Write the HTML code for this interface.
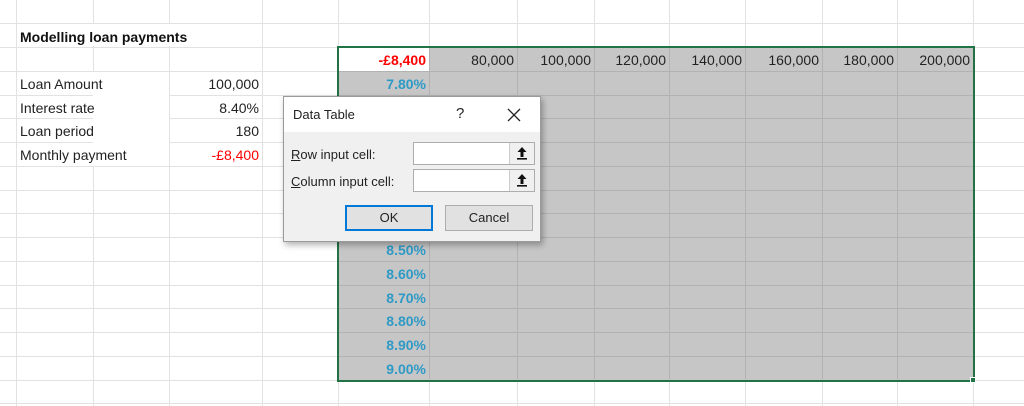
<!DOCTYPE html>
<html><head><meta charset="utf-8"><style>
*{margin:0;padding:0;box-sizing:border-box}
body{width:1024px;height:406px;background:#fff;position:relative;overflow:hidden;font-family:"Liberation Sans",sans-serif;font-size:14px;color:#222}
.v{position:absolute;top:0;width:1px;height:406px;background:#e2e2e2}
.h{position:absolute;left:0;height:1px;width:1024px;background:#e2e2e2}
.t{position:absolute;line-height:24px;height:24px;white-space:nowrap}
.r{text-align:right}
.gv{position:absolute;width:1px;background:#b2b2b2}
.gh{position:absolute;height:1px;background:#b2b2b2}
.pct{color:#2e9ac6;font-weight:bold}
.ab{position:absolute;right:0;top:0;width:25px;height:21px;background:#f0f0f0;border-left:1px solid #ccc}
</style></head><body>
<div class="v" style="left:16px"></div><div class="v" style="left:93px"></div><div class="v" style="left:169px"></div><div class="v" style="left:262px"></div><div class="v" style="left:338px"></div><div class="v" style="left:429px"></div><div class="v" style="left:517px"></div><div class="v" style="left:594px"></div><div class="v" style="left:669px"></div><div class="v" style="left:745px"></div><div class="v" style="left:822px"></div><div class="v" style="left:897px"></div><div class="v" style="left:973px"></div>
<div class="h" style="top:23px"></div><div class="h" style="top:47px"></div><div class="h" style="top:71px"></div><div class="h" style="top:95px"></div><div class="h" style="top:118px"></div><div class="h" style="top:142px"></div><div class="h" style="top:166px"></div><div class="h" style="top:190px"></div><div class="h" style="top:213px"></div><div class="h" style="top:237px"></div><div class="h" style="top:261px"></div><div class="h" style="top:285px"></div><div class="h" style="top:308px"></div><div class="h" style="top:332px"></div><div class="h" style="top:356px"></div><div class="h" style="top:380px"></div><div class="h" style="top:403px"></div>
<div style="position:absolute;left:93px;top:24px;width:150px;height:22px;background:#fff"></div>
<div style="position:absolute;left:93px;top:72px;width:76px;height:94px;background:#fff"></div>
<div class="t" style="left:20px;top:25px;font-weight:bold;color:#111">Modelling loan payments</div>
<div class="t" style="left:20px;top:72px">Loan Amount</div>
<div class="t" style="left:20px;top:96px">Interest rate</div>
<div class="t" style="left:20px;top:119px">Loan period</div>
<div class="t" style="left:20px;top:143px">Monthly payment</div>
<div class="t r" style="left:170px;width:89px;top:72px">100,000</div>
<div class="t r" style="left:170px;width:89px;top:96px">8.40%</div>
<div class="t r" style="left:170px;width:89px;top:119px">180</div>
<div class="t r" style="left:170px;width:89px;top:143px;color:#f00">-£8,400</div>
<div style="position:absolute;left:338px;top:47px;width:636px;height:333px;background:#c6c6c6"></div>
<div style="position:absolute;left:339px;top:48px;width:90px;height:23px;background:#fff"></div>
<div class="gv" style="left:429px;top:48px;height:331px"></div><div class="gv" style="left:517px;top:48px;height:331px"></div><div class="gv" style="left:594px;top:48px;height:331px"></div><div class="gv" style="left:669px;top:48px;height:331px"></div><div class="gv" style="left:745px;top:48px;height:331px"></div><div class="gv" style="left:822px;top:48px;height:331px"></div><div class="gv" style="left:897px;top:48px;height:331px"></div>
<div class="gh" style="left:339px;width:634px;top:71px"></div><div class="gh" style="left:339px;width:634px;top:95px"></div><div class="gh" style="left:339px;width:634px;top:118px"></div><div class="gh" style="left:339px;width:634px;top:142px"></div><div class="gh" style="left:339px;width:634px;top:166px"></div><div class="gh" style="left:339px;width:634px;top:190px"></div><div class="gh" style="left:339px;width:634px;top:213px"></div><div class="gh" style="left:339px;width:634px;top:237px"></div><div class="gh" style="left:339px;width:634px;top:261px"></div><div class="gh" style="left:339px;width:634px;top:285px"></div><div class="gh" style="left:339px;width:634px;top:308px"></div><div class="gh" style="left:339px;width:634px;top:332px"></div><div class="gh" style="left:339px;width:634px;top:356px"></div>
<div style="position:absolute;left:337px;top:46px;width:638px;height:336px;border:2px solid #217346"></div>
<div style="position:absolute;left:970px;top:377px;width:6px;height:6px;background:#217346;border:1px solid #fff"></div>
<div class="t r" style="left:339px;width:87px;top:48px;color:#f00;font-weight:bold">-£8,400</div>
<div class="t r" style="left:430px;width:84px;top:48px">80,000</div>
<div class="t r" style="left:518px;width:73px;top:48px">100,000</div>
<div class="t r" style="left:595px;width:71px;top:48px">120,000</div>
<div class="t r" style="left:670px;width:72px;top:48px">140,000</div>
<div class="t r" style="left:746px;width:73px;top:48px">160,000</div>
<div class="t r" style="left:823px;width:71px;top:48px">180,000</div>
<div class="t r" style="left:898px;width:72px;top:48px">200,000</div>
<div class="t r pct" style="left:339px;width:87px;top:72px">7.80%</div>
<div class="t r pct" style="left:339px;width:87px;top:238px">8.50%</div>
<div class="t r pct" style="left:339px;width:87px;top:262px">8.60%</div>
<div class="t r pct" style="left:339px;width:87px;top:286px">8.70%</div>
<div class="t r pct" style="left:339px;width:87px;top:309px">8.80%</div>
<div class="t r pct" style="left:339px;width:87px;top:333px">8.90%</div>
<div class="t r pct" style="left:339px;width:87px;top:357px">9.00%</div>
<div style="position:absolute;left:283px;top:96px;width:258px;height:146px;background:#f0f0f0;border:1px solid #9a9a9a;box-shadow:2px 3px 6px rgba(0,0,0,.3)">
 <div style="position:absolute;left:0;top:0;width:256px;height:35px;background:#fff"></div>
 <div class="t" style="left:9px;top:6px;font-size:13px">Data Table</div>
 <div class="t" style="left:172px;top:5px;font-size:15px">?</div>
 <svg style="position:absolute;left:223px;top:11px" width="14" height="14"><path d="M1 1L13 13M13 1L1 13" stroke="#222" stroke-width="1.3"/></svg>
 <div class="t" style="left:7px;top:46px;font-size:13px"><u>R</u>ow input cell:</div>
 <div class="t" style="left:7px;top:73px;font-size:13px"><u>C</u>olumn input cell:</div>
 <div style="position:absolute;left:129px;top:45px;width:122px;height:23px;border:1px solid #adadad;background:#fff"><div class="ab"><svg width="24" height="21"><path d="M12 4L7.5 9H10.5V14H13.5V9H16.5Z" fill="#111"/><rect x="7" y="15" width="10" height="1.6" fill="#111"/></svg></div></div>
 <div style="position:absolute;left:129px;top:72px;width:122px;height:23px;border:1px solid #adadad;background:#fff"><div class="ab"><svg width="24" height="21"><path d="M12 4L7.5 9H10.5V14H13.5V9H16.5Z" fill="#111"/><rect x="7" y="15" width="10" height="1.6" fill="#111"/></svg></div></div>
 <div style="position:absolute;left:61px;top:108px;width:88px;height:26px;border:2px solid #0078d7;background:#e1e1e1;text-align:center;line-height:22px;font-size:13px">OK</div>
 <div style="position:absolute;left:161px;top:108px;width:88px;height:26px;border:1px solid #adadad;background:#e1e1e1;text-align:center;line-height:24px;font-size:13px">Cancel</div>
</div>
</body></html>
